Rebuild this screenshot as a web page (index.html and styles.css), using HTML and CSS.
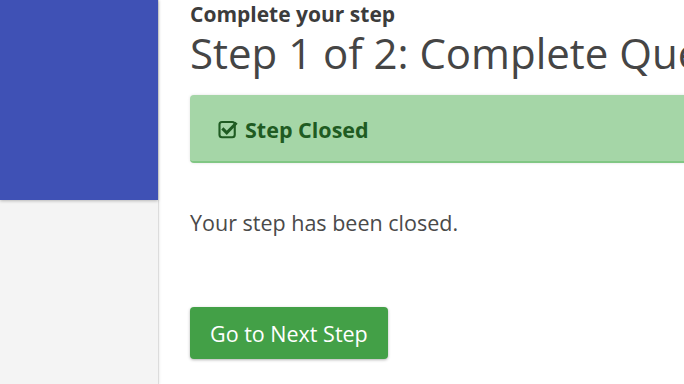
FILE: index.html
```html
<!DOCTYPE html>
<html>
<head>
<meta charset="utf-8">
<link rel="stylesheet" href="styles.css">
</head>
<body>
<div class="layout">
  <aside class="sidebar">
    <div class="sidebar-head"></div>
    <div class="sidebar-body"></div>
  </aside>
  <main class="main">
    <div class="eyebrow">Complete your step</div>
    <h1 class="title">Step 1 of 2: Complete Questionnaire</h1>
    <div class="alert">
      <svg class="alert-icon" viewBox="0 0 16 16" width="20" height="20">
        <rect x="1.2" y="2.4" width="12.2" height="12.2" rx="2" fill="none" stroke="#1f5b22" stroke-width="1.7"/>
        <path d="M4.3 8.3 L7 11 L14 3.8" fill="none" stroke="#1f5b22" stroke-width="2.4" stroke-linecap="square"/>
      </svg>
      <span>Step Closed</span>
    </div>
    <p class="message">Your step has been closed.</p>
    <button class="btn">Go to Next Step</button>
  </main>
</div>
</body>
</html>
```
FILE: styles.css
```css
html, body {
  margin: 0;
  padding: 0;
  height: 100%;
  background: #fff;
  font-family: "Open Sans", "Noto Sans", sans-serif;
  overflow: hidden;
}
.layout {
  display: flex;
  height: 100%;
}
.sidebar {
  width: 158px;
  flex: none;
  display: flex;
  flex-direction: column;
  background: #f4f4f4;
  border-right: 1px solid #dcdcdc;
  box-shadow: 1px 0 2px rgba(0,0,0,0.06);
}
.sidebar-head {
  height: 200px;
  background: #3f51b5;
  box-shadow: 0 1px 3px rgba(0,0,0,0.25);
}
.sidebar-body {
  flex: 1;
}
.main {
  flex: 1;
  min-width: 0;
  padding: 0 0 0 31px;
  overflow: hidden;
}
.eyebrow {
  margin-top: 2px;
  font-size: 21px;
  font-weight: 700;
  color: #3c3c3c;
  line-height: 24px;
}
.title {
  margin: 0;
  font-size: 42px;
  font-weight: 400;
  color: #454545;
  line-height: 54px;
  white-space: nowrap;
}
.alert {
  margin-top: 15px;
  height: 68px;
  box-sizing: border-box;
  width: 600px;
  background: #a5d6a7;
  border-bottom: 2px solid #81c784;
  border-radius: 4px;
  box-shadow: 0 0 3px rgba(0,0,0,0.12);
  display: flex;
  align-items: center;
  gap: 7px;
  padding: 2px 0 0 28px;
  color: #1f5b22;
  font-size: 21.5px;
  font-weight: 700;
}
.alert-icon {
  flex: none;
}
.message {
  margin: 47px 0 0;
  font-size: 21.5px;
  color: #4a4a4a;
  line-height: 26px;
}
.btn {
  margin-top: 71px;
  height: 52px;
  padding: 0 20px;
  background: #43a047;
  color: #fff;
  border: none;
  border-radius: 4px;
  box-shadow: 0 1px 3px rgba(0,0,0,0.3);
  font-family: "Open Sans", sans-serif;
  font-size: 21.5px;
}
```
